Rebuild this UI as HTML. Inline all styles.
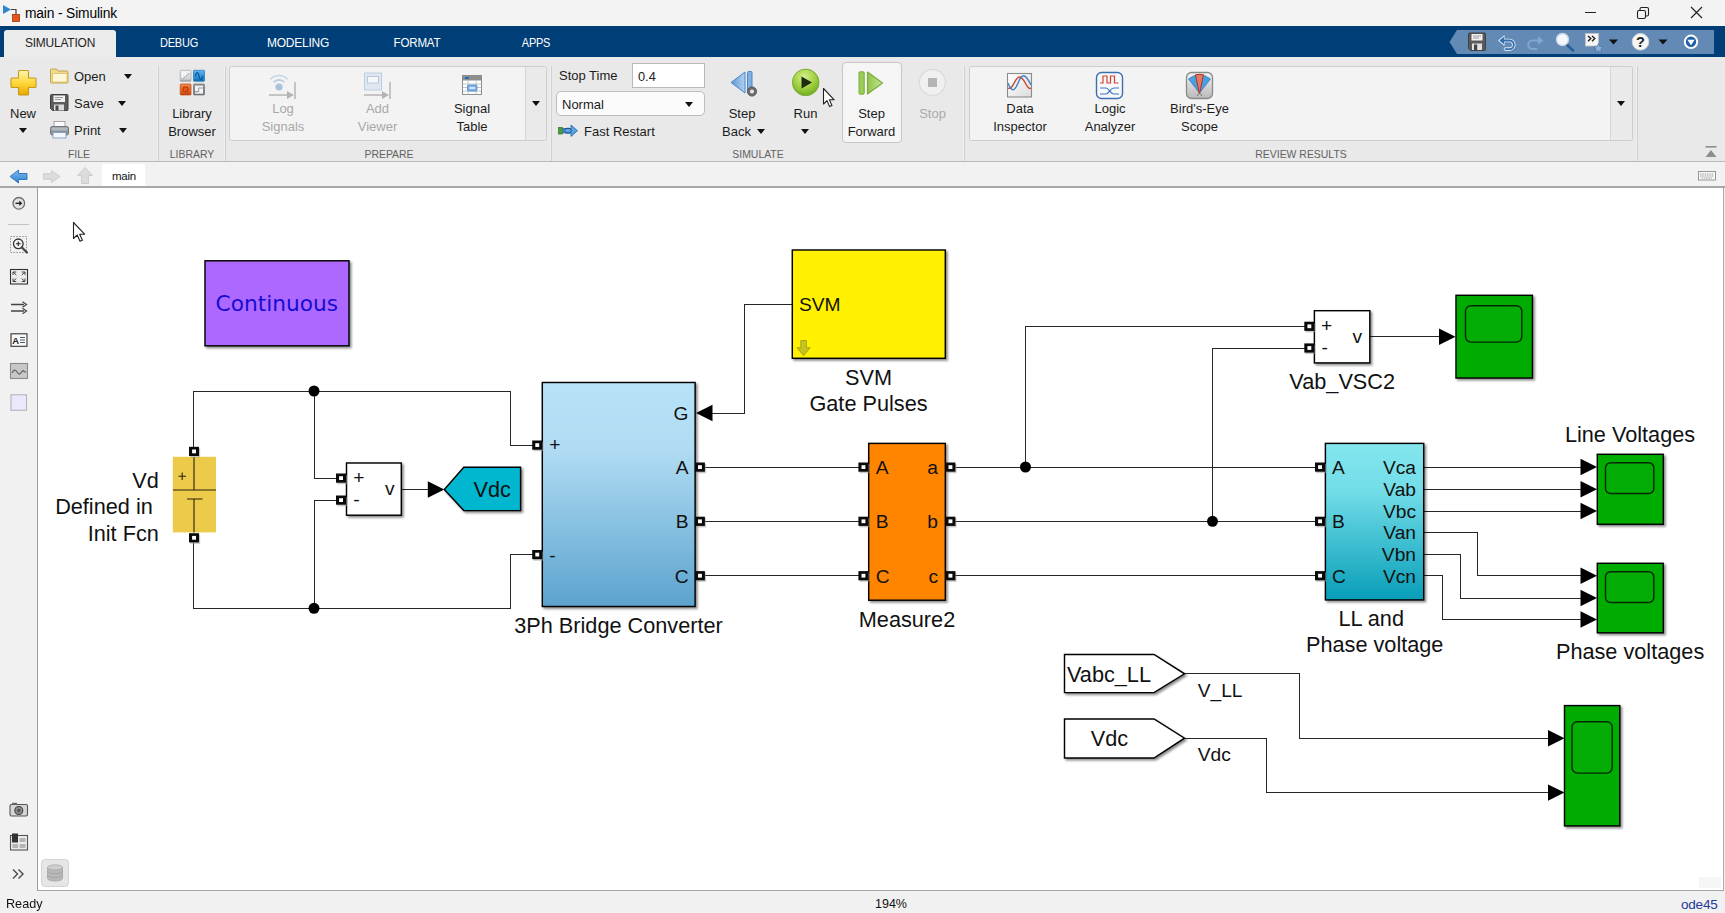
<!DOCTYPE html>
<html lang="en">
<head>
<meta charset="utf-8">
<title>main - Simulink</title>
<style>
html,body{margin:0;padding:0;}
body{width:1725px;height:913px;overflow:hidden;background:#f0f0f0;position:relative;
  font-family:"Liberation Sans","DejaVu Sans",sans-serif;font-size:12px;color:#1c1c1c;}
.a{position:absolute;}
.t{position:absolute;white-space:nowrap;line-height:16px;height:16px;}
.c{position:absolute;white-space:nowrap;line-height:16px;height:16px;transform:translateX(-50%);text-align:center;}
#title{left:0;top:0;width:1725px;height:26px;background:#f3f3f3;}
#tabs{left:0;top:26px;width:1725px;height:31px;background:#003e78;}
#tabsel{left:4px;top:30px;width:112px;height:28px;background:#ececec;border-radius:3px 3px 0 0;}
.tab{color:#fff;font-size:12px;top:35px;letter-spacing:-0.2px;}
#ribbon{left:0;top:57px;width:1725px;height:103.5px;background:#e9e9e9;border-bottom:1.5px solid #b9b9b9;}
.sep{position:absolute;top:66px;width:1px;height:95px;background:#cfcfcf;border-left:1px solid #f0f0f0;margin-left:-1px;}
.sec{color:#626262;font-size:11.5px;top:146px;transform:translateX(-50%) scaleX(0.908);}
.gal{position:absolute;top:66px;height:73px;border:1px solid #cdcdcd;border-radius:2.5px;background:#f3f3f3;}
.gdd{position:absolute;top:0;right:0;width:20px;height:73px;border-left:1px solid #d6d6d6;background:#eaeaea;border-radius:0 3px 3px 0;}
.lbl{font-size:13px;color:#1c1c1c;margin-top:0.7px;}
.dis{color:#a9a9a9;}
.tri{position:absolute;width:0;height:0;border-left:4.5px solid transparent;border-right:4.5px solid transparent;border-top:5px solid #111;}
#crumb{left:0;top:162px;width:1725px;height:25px;background:#f2f2f2;}
#crumbline{left:0;top:186px;width:1725px;height:2px;background:#a8a8a8;}
#maintab{left:102px;top:164px;width:43px;height:23px;background:#fff;border-radius:2px 2px 0 0;}
#palette{left:0;top:188px;width:37px;height:703px;background:#f1f1f1;}
#canvas{left:37px;top:188px;width:1685px;height:702px;background:#fff;border-left:1px solid #9c9c9c;border-bottom:1px solid #a6a6a6;border-right:1px solid #ababab;}
#status{left:0;top:891px;width:1725px;height:22px;background:#f1f1f1;}
</style>
</head>
<body>
<!-- ===== title bar ===== -->
<div class="a" id="title"></div>
<svg class="a" style="left:2px;top:3px" width="20" height="20" viewBox="0 0 20 20">
  <polygon points="1,2 1,11 9,6.5" fill="#2f86c9"/>
  <polyline points="9,6.5 14,6.5 14,12" fill="none" stroke="#444" stroke-width="1.2"/>
  <rect x="10.5" y="11.5" width="7" height="7" fill="#e2581c" stroke="#a63a0c" stroke-width="0.8"/>
</svg>
<div class="t" style="left:25px;top:5.5px;font-size:13.8px;color:#000;letter-spacing:-0.15px">main - Simulink</div>
<svg class="a" style="left:1570px;top:0" width="155" height="26" viewBox="0 0 155 26">
  <line x1="15" y1="12.5" x2="26" y2="12.5" stroke="#222" stroke-width="1"/>
  <rect x="67.5" y="10.5" width="8" height="8" rx="1.5" fill="none" stroke="#222" stroke-width="1.1"/>
  <path d="M70 10.5 V9 a1.5 1.5 0 0 1 1.5 -1.5 H77 a1.5 1.5 0 0 1 1.5 1.5 V14.5 a1.5 1.5 0 0 1 -1.5 1.5 H75.5" fill="none" stroke="#222" stroke-width="1.1"/>
  <path d="M121 7 L132 18 M132 7 L121 18" stroke="#222" stroke-width="1.2" fill="none"/>
</svg>

<!-- ===== tab strip ===== -->
<div class="a" id="tabs"></div>
<div class="a" id="tabsel"></div>
<div class="c tab" style="left:59.5px;color:#222;transform:translateX(-50%) scaleX(0.996)">SIMULATION</div>
<div class="c tab" style="left:178.7px;transform:translateX(-50%) scaleX(0.917)">DEBUG</div>
<div class="c tab" style="left:298px;transform:translateX(-50%) scaleX(0.997)">MODELING</div>
<div class="c tab" style="left:416.6px;transform:translateX(-50%) scaleX(0.964)">FORMAT</div>
<div class="c tab" style="left:535.8px;transform:translateX(-50%) scaleX(0.912)">APPS</div>

<!-- ===== ribbon ===== -->
<div class="a" id="ribbon"></div>
<!-- FILE section -->
<svg class="a" style="left:9px;top:68px" width="29" height="29" viewBox="0 0 29 29">
  <defs><linearGradient id="gplus" x1="0" y1="0" x2="0" y2="1"><stop offset="0" stop-color="#fff6b0"/><stop offset="0.5" stop-color="#ffd83a"/><stop offset="1" stop-color="#e8a800"/></linearGradient></defs>
  <path d="M10.5 2.5 h8 a1 1 0 0 1 1 1 v6.5 h6.5 a1 1 0 0 1 1 1 v7.5 a1 1 0 0 1 -1 1 h-6.5 v6.5 a1 1 0 0 1 -1 1 h-8 a1 1 0 0 1 -1 -1 v-6.5 h-6.5 a1 1 0 0 1 -1 -1 v-7.5 a1 1 0 0 1 1 -1 h6.5 v-6.5 a1 1 0 0 1 1 -1 z" fill="url(#gplus)" stroke="#c79a1a" stroke-width="1.1"/>
</svg>
<div class="c lbl" style="left:23px;top:105px">New</div>
<div class="tri" style="left:18.5px;top:128px"></div>
<!-- open -->
<svg class="a" style="left:49px;top:67px" width="21" height="18" viewBox="0 0 21 18">
  <path d="M1.5 3 q0 -1 1 -1 h5 l1.5 2 h9 q1 0 1 1 v10 q0 1 -1 1 h-15.5 q-1 0 -1 -1 z" fill="#f0d98a" stroke="#c4a64a" stroke-width="1"/>
  <path d="M3.5 6.5 h14.5 v8.5 h-14.5 z" fill="#fff8d8" stroke="#d8be6a" stroke-width="0.8"/>
</svg>
<div class="t lbl" style="left:74px;top:68px">Open</div>
<div class="tri" style="left:123.5px;top:74px"></div>
<!-- save -->
<svg class="a" style="left:49px;top:93px" width="21" height="19" viewBox="0 0 21 19">
  <path d="M1.5 2.5 q0 -1 1 -1 h15.5 q1 0 1 1 v14 q0 1 -1 1 h-14.5 l-2 -2 z" fill="#5c5c5c" stroke="#3e3e3e" stroke-width="1"/>
  <rect x="4.5" y="2.5" width="11.5" height="6.5" fill="#f2f2f2"/>
  <rect x="6" y="4" width="8" height="1" fill="#9a9a9a"/><rect x="6" y="6" width="6" height="1" fill="#9a9a9a"/>
  <rect x="5" y="11.5" width="10" height="6" fill="#dcdcdc"/><rect x="6.5" y="12.5" width="3" height="5" fill="#4a4a4a"/>
</svg>
<div class="t lbl" style="left:74px;top:95px">Save</div>
<div class="tri" style="left:117.5px;top:101px"></div>
<!-- print -->
<svg class="a" style="left:49px;top:120px" width="21" height="20" viewBox="0 0 21 20">
  <rect x="5" y="1.5" width="11" height="6" fill="#fafafa" stroke="#9c9c9c" stroke-width="0.9"/>
  <rect x="1.5" y="6.5" width="18" height="8.5" rx="1.8" fill="#8e9499" stroke="#6a7076" stroke-width="0.9"/>
  <rect x="2.5" y="7.5" width="16" height="3" rx="1" fill="#b4b9be"/>
  <rect x="4" y="12.5" width="13" height="5.5" fill="#f4f8fc" stroke="#7d9cc0" stroke-width="0.9"/>
</svg>
<div class="t lbl" style="left:74px;top:122px">Print</div>
<div class="tri" style="left:118.5px;top:128px"></div>
<div class="c sec" style="left:79px">FILE</div>
<div class="sep" style="left:158px"></div>
<!-- LIBRARY section -->
<svg class="a" style="left:179px;top:69px" width="27" height="27" viewBox="0 0 27 27">
  <defs>
    <linearGradient id="gl1" x1="0" y1="0" x2="0" y2="1"><stop offset="0" stop-color="#f4f4f4"/><stop offset="0.8" stop-color="#cfd3d8"/><stop offset="1" stop-color="#8e9499"/></linearGradient>
    <linearGradient id="gl2" x1="0" y1="0" x2="0" y2="1"><stop offset="0" stop-color="#62b6ee"/><stop offset="0.75" stop-color="#2288d0"/><stop offset="1" stop-color="#0f66a6"/></linearGradient>
    <linearGradient id="gl3" x1="0" y1="0" x2="0" y2="1"><stop offset="0" stop-color="#f08a50"/><stop offset="0.75" stop-color="#e4581a"/><stop offset="1" stop-color="#b8400c"/></linearGradient>
    <linearGradient id="gl4" x1="0" y1="0" x2="0" y2="1"><stop offset="0" stop-color="#9a9a9a"/><stop offset="1" stop-color="#6e7276"/></linearGradient>
  </defs>
  <rect x="1.2" y="1.3" width="10.8" height="11" rx="0.8" fill="url(#gl1)" stroke="#a4a8ac" stroke-width="0.7"/>
  <path d="M3.6 3 v6 M6.300 3 v4.500" stroke="#fff" stroke-width="1.500" fill="none"/>
  <path d="M3 10.300 L10.500 4.500" stroke="#9aa0a6" stroke-width="0.900" fill="none"/>
  <rect x="14.500" y="1.300" width="11" height="11" rx="0.800" fill="url(#gl2)" stroke="#1d74b8" stroke-width="0.700"/>
  <path d="M16.300 7.300 c1.400 -4.800 2.600 -4.800 3.800 0 s2.400 4.200 3.800 -0.500" fill="none" stroke="#0b5a9c" stroke-width="1.300"/>
  <rect x="1.200" y="15" width="10.800" height="11" rx="0.800" fill="url(#gl3)" stroke="#c04a14" stroke-width="0.700"/>
  <rect x="4.300" y="18.200" width="4.600" height="4.600" rx="0.800" fill="#e4581a" stroke="#b8400c" stroke-width="1.300"/>
  <rect x="14.500" y="15" width="11" height="11" rx="0.800" fill="url(#gl4)" stroke="#70757a" stroke-width="0.700"/>
  <path d="M16 16.700 h8 v8 h-8 z" fill="#f2f2f2"/>
  <path d="M16 22.600 h3.600 v-3.600 h4.400" fill="none" stroke="#9ea3a8" stroke-width="1.100"/>
</svg>
<div class="c lbl" style="left:192px;top:105px">Library</div>
<div class="c lbl" style="left:192px;top:123px">Browser</div>
<div class="c sec" style="left:192px">LIBRARY</div>
<div class="sep" style="left:225px"></div>
<!-- PREPARE section -->
<div class="gal" style="left:229px;width:316px"><div class="gdd"></div></div>
<div class="tri" style="left:531.5px;top:101px"></div>
<svg class="a" style="left:267px;top:70px" width="32" height="30" viewBox="0 0 32 30">
  <circle cx="12" cy="17" r="3.6" fill="#a9c3dc"/>
  <path d="M6.6 12.2 a7.5 7.5 0 0 1 10.8 0" fill="none" stroke="#b4cbe2" stroke-width="1.6"/>
  <path d="M3.4 9.2 a12 12 0 0 1 17.2 0" fill="none" stroke="#c3d5e6" stroke-width="1.6"/>
  <line x1="2" y1="25" x2="22" y2="25" stroke="#b4b4b4" stroke-width="1.5"/>
  <polygon points="20,21 27,25 20,29" fill="#b4b4b4"/>
  <line x1="28" y1="12" x2="28" y2="29" stroke="#b4b4b4" stroke-width="1.5"/>
</svg>
<div class="c lbl dis" style="left:283px;top:100px">Log</div>
<div class="c lbl dis" style="left:283px;top:118px">Signals</div>
<svg class="a" style="left:362px;top:70px" width="32" height="30" viewBox="0 0 32 30">
  <rect x="2.5" y="3" width="17" height="17" fill="#dfe8f1" stroke="#c0cfde" stroke-width="1"/>
  <rect x="5.5" y="6.5" width="11" height="6.5" fill="#f4f8fb" stroke="#b7c8da" stroke-width="1"/>
  <line x1="2" y1="25" x2="22" y2="25" stroke="#b4b4b4" stroke-width="1.5"/>
  <polygon points="20,21 27,25 20,29" fill="#b4b4b4"/>
  <line x1="28" y1="12" x2="28" y2="29" stroke="#b4b4b4" stroke-width="1.5"/>
</svg>
<div class="c lbl dis" style="left:377.5px;top:100px">Add</div>
<div class="c lbl dis" style="left:377.5px;top:118px">Viewer</div>
<svg class="a" style="left:461px;top:74px" width="22" height="22" viewBox="0 0 22 22">
  <rect x="1.5" y="1.5" width="19" height="19" fill="#fff" stroke="#8c8c8c" stroke-width="1"/>
  <rect x="2" y="2" width="18" height="4.5" fill="#8e8e8e"/>
  <rect x="4" y="3" width="4" height="2" fill="#1f6cc0"/>
  <path d="M2 10 h18 M2 13.5 h18 M2 17 h18 M7 6.5 v14 M15 6.5 v14" stroke="#c4c4c4" stroke-width="1" fill="none"/>
  <rect x="6.5" y="11" width="9.5" height="6" rx="1" fill="#7fb0ea" stroke="#4b8bd6" stroke-width="0.8"/>
  <rect x="8.5" y="13" width="5.5" height="2" fill="#d6e6fa"/>
</svg>
<div class="c lbl" style="left:472px;top:100px">Signal</div>
<div class="c lbl" style="left:472px;top:118px">Table</div>
<div class="c sec" style="left:389px">PREPARE</div>
<div class="sep" style="left:551px"></div>
<!-- SIMULATE section -->
<div class="t lbl" style="left:559px;top:67px">Stop Time</div>
<div class="a" style="left:632px;top:63px;width:71px;height:23px;background:#fff;border:1px solid #b9b9b9;"></div>
<div class="t" style="left:638px;top:68.6px;font-size:12.8px;color:#222">0.4</div>
<div class="a" style="left:556px;top:91px;width:147px;height:23px;background:#fbfbfb;border:1px solid #bdbdbd;border-radius:5px;"></div>
<div class="t lbl" style="left:562px;top:96px">Normal</div>
<div class="tri" style="left:684.5px;top:101.5px"></div>
<svg class="a" style="left:557px;top:123px" width="22" height="16" viewBox="0 0 22 16">
  <rect x="1.5" y="4.5" width="4" height="6.5" fill="#4c9a3a" stroke="#2f7622" stroke-width="0.7"/>
  <path d="M6 5.5 h8 v-3.5 l6.5 5.7 l-6.5 5.7 v-3.5 h-8 z" fill="#5da3e0" stroke="#2b6cb0" stroke-width="0.9"/>
  <ellipse cx="11" cy="7.7" rx="3.4" ry="2.6" fill="none" stroke="#1d4f8c" stroke-width="1"/>
</svg>
<div class="t lbl" style="left:584px;top:123px">Fast Restart</div>
<!-- step back -->
<svg class="a" style="left:728px;top:69px" width="32" height="30" viewBox="0 0 32 30">
  <defs><linearGradient id="gsb" x1="0" y1="0" x2="1" y2="0"><stop offset="0" stop-color="#5f9bd6"/><stop offset="1" stop-color="#b3d0ee"/></linearGradient></defs>
  <polygon points="3,13.5 17,3 17,24" fill="url(#gsb)" stroke="#4a86c4" stroke-width="1"/>
  <rect x="19.5" y="2.5" width="4.5" height="21" rx="1" fill="#7fb0e2" stroke="#4a86c4" stroke-width="1"/>
  <circle cx="24" cy="22.5" r="4.6" fill="#6e6e6e" stroke="#4a4a4a" stroke-width="0.8"/>
  <circle cx="24" cy="22.5" r="2" fill="#e8e8e8"/>
</svg>
<div class="c lbl" style="left:742px;top:105px">Step</div>
<div class="t lbl" style="left:722px;top:123px">Back</div>
<div class="tri" style="left:756.5px;top:128.5px"></div>
<!-- run -->
<svg class="a" style="left:790px;top:67px" width="32" height="32" viewBox="0 0 32 32">
  <defs><radialGradient id="grun" cx="0.45" cy="0.3" r="0.75"><stop offset="0" stop-color="#d6f08a"/><stop offset="0.55" stop-color="#9fd040"/><stop offset="1" stop-color="#6aa51e"/></radialGradient></defs>
  <circle cx="15.7" cy="15.4" r="13.3" fill="url(#grun)" stroke="#7cad34" stroke-width="1"/>
  <polygon points="11.5,9.5 11.5,21.5 22,15.5" fill="#1f2a12"/>
</svg>
<div class="c lbl" style="left:805.5px;top:105px">Run</div>
<div class="tri" style="left:801px;top:128.5px"></div>
<!-- step forward -->
<div class="a" style="left:842px;top:62px;width:58px;height:79px;background:#f5f5f5;border:1px solid #c6c6c6;border-radius:4px;"></div>
<svg class="a" style="left:856px;top:69px" width="30" height="28" viewBox="0 0 30 28">
  <defs><linearGradient id="gsf" x1="0" y1="0" x2="1" y2="0"><stop offset="0" stop-color="#8fc44a"/><stop offset="1" stop-color="#c6e596"/></linearGradient></defs>
  <rect x="3" y="2.8" width="5.2" height="22.4" rx="1" fill="#9ccc58" stroke="#78ac36" stroke-width="1"/>
  <polygon points="11.5,3 11.5,25 26.5,14" fill="url(#gsf)" stroke="#78ac36" stroke-width="1.1" stroke-linejoin="round"/>
</svg>
<div class="c lbl" style="left:871.5px;top:105px">Step</div>
<div class="c lbl" style="left:871.5px;top:123px">Forward</div>
<!-- stop -->
<svg class="a" style="left:917px;top:67px" width="32" height="32" viewBox="0 0 32 32">
  <circle cx="15.4" cy="15.4" r="13" fill="#f0f0f0" stroke="#dadada" stroke-width="1.2"/>
  <rect x="11" y="11" width="9" height="9" fill="#b5b5b5"/>
</svg>
<div class="c lbl dis" style="left:932.5px;top:105px">Stop</div>
<div class="c sec" style="left:758px">SIMULATE</div>
<div class="sep" style="left:964px"></div>
<!-- REVIEW RESULTS section -->
<div class="gal" style="left:969px;width:662px"><div class="gdd" style="width:21px"></div></div>
<div class="tri" style="left:1616.5px;top:101px"></div>
<svg class="a" style="left:1005px;top:71px" width="30" height="28" viewBox="0 0 30 28">
  <defs><linearGradient id="gdi" x1="0" y1="0" x2="1" y2="1"><stop offset="0" stop-color="#ffffff"/><stop offset="1" stop-color="#dcdcdc"/></linearGradient></defs>
  <rect x="2.5" y="2.5" width="24" height="23.5" fill="url(#gdi)" stroke="#8c8c8c" stroke-width="1.1"/>
  <path d="M3 17 C8 20 10 5 15 6 S22 20 26 17" fill="none" stroke="#d0452c" stroke-width="1.4"/>
  <path d="M3 12 C6 20 9 22 13 12 S20 2 26 14" fill="none" stroke="#3a80c8" stroke-width="1.4"/>
</svg>
<div class="c lbl" style="left:1020px;top:100px">Data</div>
<div class="c lbl" style="left:1020px;top:118px">Inspector</div>
<svg class="a" style="left:1094px;top:70px" width="32" height="30" viewBox="0 0 32 30">
  <rect x="2.5" y="2.5" width="26" height="26" rx="5" fill="#f6f8fb" stroke="#3f6fb0" stroke-width="1.4"/>
  <path d="M6 13 h3 v-7 h4 v7 h3.5 v-7 h4 v7 h4" fill="none" stroke="#d8422c" stroke-width="1.2"/>
  <path d="M6 18 h6 c3 0 4 6 8 6 h5 M6 24 h6 c3 0 4 -6 8 -6 h5" fill="none" stroke="#3a78c0" stroke-width="1.2"/>
</svg>
<div class="c lbl" style="left:1110px;top:100px">Logic</div>
<div class="c lbl" style="left:1110px;top:118px">Analyzer</div>
<svg class="a" style="left:1184px;top:70px" width="32" height="30" viewBox="0 0 32 30">
  <defs><linearGradient id="gbe" x1="0" y1="0" x2="0" y2="1"><stop offset="0" stop-color="#f2f2f2"/><stop offset="1" stop-color="#b9b9b9"/></linearGradient></defs>
  <rect x="2.5" y="2.5" width="26" height="26" rx="5" fill="url(#gbe)" stroke="#8a8a8a" stroke-width="1.3"/>
  <path d="M15.5 23 L4.5 9 Q15.5 0.5 26.5 9 Z" fill="#4a9fe0" stroke="#2f7fc4" stroke-width="0.8"/>
  <path d="M15.5 24 L11.5 4.8 Q15.5 3.8 19.5 4.8 Z" fill="#e07a68" stroke="#b8321c" stroke-width="1"/>
  <path d="M13 26 l2.5 -3 l2.5 3" fill="none" stroke="#777" stroke-width="1"/>
</svg>
<div class="c lbl" style="left:1199.5px;top:100px">Bird's-Eye</div>
<div class="c lbl" style="left:1199.5px;top:118px">Scope</div>
<div class="c sec" style="left:1300.5px">REVIEW RESULTS</div>
<div class="sep" style="left:1637px"></div>
<!-- collapse icon -->
<svg class="a" style="left:1703.3px;top:144px" width="16" height="16" viewBox="0 0 16 16">
  <rect x="2.5" y="2" width="11" height="1.6" fill="#8e8e8e"/>
  <polygon points="8,6 13.5,13 2.5,13" fill="#8e8e8e"/>
</svg>
<!-- cursor near Run -->
<svg class="a" style="left:822px;top:87px" width="14" height="22" viewBox="0 0 14 22">
  <path d="M1.5 1.5 V17 L5 13.6 L7.6 19.6 L10 18.6 L7.4 12.8 H12.2 Z" fill="#fff" stroke="#222" stroke-width="1.1" stroke-linejoin="round"/>
</svg>
<!-- quick access toolbar -->
<svg class="a" style="left:1445px;top:28px" width="275" height="28" viewBox="1445 28 275 28">
  <polygon points="1449.5,42 1457,30 1714,30 1714,54 1457,54" fill="#628ab5"/>
  <!-- save -->
  <path d="M1468.5 34 q0 -1 1 -1 h15 q1 0 1 1 v15.5 q0 1 -1 1 h-14 l-2 -2 z" fill="#5a5a5a" stroke="#3c3c3c" stroke-width="0.9"/>
  <rect x="1471.5" y="34" width="11" height="6.5" fill="#f2f2f2"/>
  <rect x="1473" y="35.5" width="8" height="1" fill="#999"/><rect x="1473" y="37.5" width="6" height="1" fill="#999"/>
  <rect x="1472" y="43.5" width="10" height="6.5" fill="#e2e2e2"/><rect x="1474" y="44.5" width="3.2" height="5.5" fill="#444"/>
  <!-- undo -->
  <path d="M1501 40.5 h8.5 a4.3 4.3 0 0 1 0 8.6 h-4" fill="none" stroke="#dfe9f4" stroke-width="3.6" stroke-linecap="round"/>
  <polygon points="1498,40.5 1504.5,35 1504.5,46" fill="#dfe9f4"/>
  <path d="M1501 40.5 h8.5 a4.3 4.3 0 0 1 0 8.6 h-4" fill="none" stroke="#2f6fb2" stroke-width="1.8" stroke-linecap="round"/>
  <polygon points="1499.5,40.5 1504,36.8 1504,44.2" fill="#2f6fb2"/>
  <!-- redo -->
  <path d="M1541 40.5 h-8.5 a4.3 4.3 0 0 0 0 8.6 h4" fill="none" stroke="#82a6cc" stroke-width="2" stroke-linecap="round"/>
  <polygon points="1543.5,40.5 1538,36 1538,45" fill="#82a6cc"/>
  <!-- search -->
  <line x1="1566" y1="44" x2="1573" y2="50.5" stroke="#2a5d9a" stroke-width="2.6" stroke-linecap="round"/>
  <circle cx="1562.5" cy="39.5" r="6" fill="#f4f8fc" stroke="#c9d6e4" stroke-width="1.4"/>
  <!-- doc with arrows -->
  <rect x="1585.5" y="33.5" width="13" height="12.5" fill="#f4f4f4" stroke="#c4c4c4" stroke-width="0.8"/>
  <path d="M1588 36 l2.8 2.6 l-2.8 2.6 M1592 36 l2.8 2.6 l-2.8 2.6" fill="none" stroke="#222" stroke-width="1.4"/>
  <polygon points="1598.500,43.500 1599.911,46.558 1603.255,46.955 1600.783,49.242 1601.439,52.545 1598.500,50.900 1595.561,52.545 1596.217,49.242 1593.745,46.955 1597.089,46.558" fill="#8fb0d8" stroke="#4a78b0" stroke-width="0.8"/>
  <polygon points="1609,39.5 1618,39.5 1613.500,44.500" fill="#111"/>
  <!-- help -->
  <circle cx="1640.500" cy="41.800" r="8.300" fill="#f6f6f6" stroke="#d4d4d4" stroke-width="1"/>
  <text x="1640.500" y="47" font-family="Liberation Sans, sans-serif" font-weight="bold" font-size="14.500" text-anchor="middle" fill="#222">?</text>
  <polygon points="1658.500,39.500 1667.500,39.500 1663,44.500" fill="#111"/>
  <!-- circle down -->
  <circle cx="1691" cy="41.800" r="6.200" fill="#1f5fa6" stroke="#ffffff" stroke-width="2"/>
  <polygon points="1687.300,39.800 1694.700,39.800 1691,45.200" fill="#fff"/>
</svg>


<!-- ===== breadcrumb ===== -->
<div class="a" id="crumb"></div>
<div class="a" id="maintab"></div>
<div class="a" id="crumbline"></div>
<div class="c" style="left:124px;top:168px;font-size:11.5px;color:#111;letter-spacing:-0.2px">main</div>
<svg class="a" style="left:0;top:162px" width="160" height="26" viewBox="0 162 160 26">
  <defs><linearGradient id="gba" x1="0" y1="0" x2="0" y2="1"><stop offset="0" stop-color="#7cbcf0"/><stop offset="1" stop-color="#2f7fd0"/></linearGradient></defs>
  <path d="M10 176.5 L18.500 170 V173.500 H27 V179.500 H18.500 V183 Z" fill="url(#gba)" stroke="#2a6fb8" stroke-width="0.9" stroke-linejoin="round"/>
  <path d="M60 176.500 L51.500 170.500 V173.800 H43.500 V179.200 H51.500 V182.500 Z" fill="#dcdcdc" stroke="#c9c9c9" stroke-width="0.9" stroke-linejoin="round"/>
  <path d="M85 167.500 L92.500 175.500 H88.500 V183.500 H81.500 V175.500 H77.500 Z" fill="#dcdcdc" stroke="#c9c9c9" stroke-width="0.9" stroke-linejoin="round"/>
</svg>
<svg class="a" style="left:1696px;top:168px" width="24" height="16" viewBox="0 0 24 16">
  <rect x="2.5" y="3.500" width="17" height="8.500" fill="#fafafa" stroke="#8c8c8c" stroke-width="0.9"/>
  <path d="M4 6 h14 M4 8 h14 M5.500 10 h11" stroke="#9a9a9a" stroke-width="1" stroke-dasharray="1.5 0.8" fill="none"/>
</svg>


<!-- ===== palette + canvas ===== -->
<div class="a" id="palette"></div>
<div class="a" id="canvas"></div>
<svg class="a" style="left:0;top:190px" width="37" height="700" viewBox="0 190 37 700">
  <!-- hide/show -->
  <circle cx="18.800" cy="203.300" r="5.800" fill="#e4e4e4" stroke="#6e6e6e" stroke-width="1.300"/>
  <path d="M15.500 203.300 h5" stroke="#222" stroke-width="1.400" fill="none"/><polygon points="19.300,200.600 22.300,203.300 19.300,206" fill="#222"/>
  <line x1="8" y1="224.500" x2="29" y2="224.500" stroke="#c4c4c4" stroke-width="1"/>
  <!-- zoom -->
  <rect x="10.500" y="236.500" width="16" height="16" fill="none" stroke="#8a8a8a" stroke-width="0.9" stroke-dasharray="1.600 1.300"/>
  <circle cx="18.300" cy="243.800" r="4.800" fill="#f4f4f4" stroke="#333" stroke-width="1.300"/>
  <path d="M16 243.800 h4.600 M18.300 241.500 v4.600" stroke="#222" stroke-width="1.100" fill="none"/>
  <line x1="22" y1="247.500" x2="27" y2="252.500" stroke="#444" stroke-width="2.200" stroke-linecap="round"/>
  <!-- fit -->
  <rect x="10.500" y="269.500" width="17" height="14.500" fill="#ececec" stroke="#333" stroke-width="1.100"/>
  <path d="M13 275 v-3 h3.200 M13 272 l3.300 3 M25 275 v-3 h-3.200 M25 272 l-3.300 3 M13 278.500 v3 h3.200 M13 281.500 l3.300 -3 M25 278.500 v3 h-3.200 M25 281.500 l-3.300 -3" fill="none" stroke="#444" stroke-width="1"/>
  <!-- arrows -->
  <path d="M11 304.500 h13 M11 311 h13" stroke="#444" stroke-width="1.300" fill="none"/>
  <path d="M22.500 301.800 l4 2.700 l-4 2.700 M22.500 308.300 l4 2.700 l-4 2.700" fill="none" stroke="#444" stroke-width="1.200"/>
  <!-- annotation -->
  <rect x="11" y="333.800" width="16" height="12.500" fill="#fafafa" stroke="#333" stroke-width="1.100"/>
  <text x="12.200" y="343.800" font-family="Liberation Sans, sans-serif" font-weight="bold" font-size="9.500" fill="#222">A</text>
  <path d="M20 337.500 h5 M20 340 h5 M20 342.500 h5" stroke="#555" stroke-width="1" fill="none"/>
  <!-- image -->
  <rect x="10.500" y="363.500" width="17" height="15" fill="#c8c8c8" stroke="#8a8a8a" stroke-width="1.100"/>
  <path d="M12 373 q2.500 -5 5 -1 t4 0.500 l2 -2 l3 2" fill="none" stroke="#6a6a6a" stroke-width="1.300"/>
  <!-- area -->
  <rect x="11" y="394.800" width="15.500" height="15.500" fill="#e9e9fb" stroke="#b4b4bc" stroke-width="1.100"/>
  <!-- camera -->
  <rect x="10" y="804.500" width="17.500" height="11.500" rx="1.500" fill="#d6d6d6" stroke="#555" stroke-width="1.100"/>
  <rect x="12" y="802.800" width="5" height="2" fill="#666"/>
  <circle cx="18.800" cy="810.500" r="4" fill="#8a8a8a" stroke="#444" stroke-width="1.100"/><circle cx="18.800" cy="810.500" r="1.700" fill="#555"/>
  <!-- model data -->
  <rect x="10.500" y="835.500" width="17" height="14.500" fill="#ececec" stroke="#555" stroke-width="1.100"/>
  <rect x="12" y="833.500" width="6" height="9" fill="#333"/>
  <rect x="19.500" y="838" width="6" height="4" fill="#b4b4b4"/><rect x="12.500" y="844" width="5.500" height="4" fill="#b4b4b4"/><rect x="19.500" y="844" width="6" height="4" fill="#b4b4b4"/>
  <!-- chevrons -->
  <path d="M13 869.500 l4.500 4.500 l-4.500 4.500 M18.500 869.500 l4.500 4.500 l-4.500 4.500" fill="none" stroke="#555" stroke-width="1.500"/>
</svg>
<!-- db button in canvas -->
<div class="a" style="left:41px;top:859px;width:26px;height:26px;background:#e6e6e6;border:1px solid #d4d4d4;border-radius:4px;"></div>
<svg class="a" style="left:45px;top:863px" width="20" height="20" viewBox="0 0 20 20">
  <path d="M2.500 4.500 v11 a7.500 2.600 0 0 0 15 0 v-11" fill="#b9b9b9" stroke="#a4a4a4" stroke-width="0.800"/>
  <ellipse cx="10" cy="4.500" rx="7.500" ry="2.600" fill="#cfcfcf" stroke="#a4a4a4" stroke-width="0.800"/>
  <path d="M2.500 8.200 a7.500 2.600 0 0 0 15 0 M2.500 11.900 a7.500 2.600 0 0 0 15 0" fill="none" stroke="#a0a0a0" stroke-width="0.800"/>
</svg>
<!-- canvas cursor -->
<svg class="a" style="left:72px;top:221px" width="15" height="23" viewBox="0 0 15 23">
  <path d="M1.500 1.500 V17.500 L5.200 14 L8 20.300 L10.400 19.200 L7.700 13.200 H12.600 Z" fill="#fff" stroke="#222" stroke-width="1.100" stroke-linejoin="round"/>
</svg>
<!-- bottom-right corner hint -->
<div class="a" style="left:1699px;top:877px;width:22px;height:11px;background:#f6f6f6;"></div>

<svg class="a" style="left:0;top:0" width="1725" height="913" viewBox="0 0 1725 913" font-family="'Liberation Sans', sans-serif" fill="#111">
  <defs>
    <filter id="sh" x="-10%" y="-10%" width="130%" height="130%"><feDropShadow dx="1.8" dy="1.8" stdDeviation="1.1" flood-color="#000" flood-opacity="0.45"/></filter>
    <linearGradient id="gbr" x1="0" y1="0" x2="0" y2="1"><stop offset="0" stop-color="#b6e3f8"/><stop offset="0.3" stop-color="#b0dcf3"/><stop offset="1" stop-color="#5ca3ce"/></linearGradient>
    <linearGradient id="gll" x1="0" y1="0" x2="0" y2="1"><stop offset="0" stop-color="#84e6ee"/><stop offset="0.3" stop-color="#72dde8"/><stop offset="1" stop-color="#089eb8"/></linearGradient>
    <g id="pt"><rect x="-5" y="-4.5" width="10" height="9.2" fill="#9a9a9a" opacity="0.55" transform="translate(1.2,1.4)"/><rect x="-5" y="-4.6" width="10" height="9.2" fill="#0a0a0a"/><rect x="-1.9" y="-1.9" width="3.9" height="3.8" fill="#fff"/></g>
    <polygon id="ah" points="0,0 -16.5,-8.2 -16.5,8.2" fill="#000"/>
    <polygon id="ahl" points="0,0 16.5,-8.2 16.5,8.2" fill="#000"/>
  </defs>
  <!-- ===== wires ===== -->
  <g fill="none" stroke="#262626" stroke-width="1" shape-rendering="crispEdges">
    <path d="M193.500 447 V391 H510 V445 H533"/>
    <path d="M314 391 V478 H337"/>
    <path d="M193.500 542 V608.300 H510 V554.500 H533"/>
    <path d="M314 608.300 V500 H337"/>
    <path d="M401.500 489.500 H430"/>
    <path d="M792 304 H744.500 V413 H710"/>
    <path d="M704 467 H859 M704 521.300 H859 M704 575.700 H859"/>
    <path d="M954.500 467 H1315.500 M954.500 521.300 H1315.500 M954.500 575.700 H1315.500"/>
    <path d="M1025.500 467 V326.300 H1305"/>
    <path d="M1212.500 521.300 V348 H1305"/>
    <path d="M1370 336.800 H1441"/>
    <path d="M1424 467 H1582 M1424 489.200 H1582 M1424 511 H1582"/>
    <path d="M1424 532.600 H1477.300 V575.700 H1582"/>
    <path d="M1424 554 H1460.500 V598 H1582"/>
    <path d="M1424 575.700 H1442.600 V619.500 H1582"/>
    <path d="M1184.500 673.800 H1299.400 V738.200 H1549"/>
    <path d="M1184.500 738.200 H1266.800 V792.600 H1549"/>
  </g>
  <!-- junction dots -->
  <g fill="#000"><circle cx="314" cy="391" r="5.500"/><circle cx="314" cy="608.300" r="5.500"/><circle cx="1025.500" cy="467" r="5.500"/><circle cx="1212.500" cy="521.300" r="5.500"/></g>
  <!-- arrowheads -->
  <use href="#ah" x="444.300" y="489.500"/>
  <use href="#ahl" x="696" y="413"/>
  <use href="#ah" x="1455.500" y="336.800"/>
  <use href="#ah" x="1597" y="467"/><use href="#ah" x="1597" y="489.200"/><use href="#ah" x="1597" y="511"/>
  <use href="#ah" x="1597" y="575.700"/><use href="#ah" x="1597" y="598"/><use href="#ah" x="1597" y="619.500"/>
  <use href="#ah" x="1564.500" y="738.200"/><use href="#ah" x="1564.500" y="792.600"/>
  <!-- ===== blocks ===== -->
  <g stroke="#030303" stroke-width="1.45" filter="url(#sh)">
    <rect x="205" y="260.800" width="144" height="85" fill="#ad67ff"/>
    <rect x="792.300" y="250" width="153" height="108.300" fill="#fff100"/>
    <rect x="542.300" y="382.500" width="152.800" height="224" fill="url(#gbr)"/>
    <rect x="868.700" y="443.400" width="76.600" height="156.800" fill="#ff8500"/>
    <rect x="1325.400" y="443.400" width="98.300" height="156.500" fill="url(#gll)"/>
    <rect x="346.500" y="463" width="54.800" height="52.200" fill="#fff"/>
    <rect x="1314.400" y="310.700" width="55.400" height="52.200" fill="#fff"/>
    <polygon points="444.300,489.400 463.800,467.200 520.600,467.200 520.600,510.600 463.800,510.600" fill="#00b7cf"/>
    <polygon points="1064.500,654.500 1154,654.500 1184.500,673.800 1154,692.600 1064.500,692.600" fill="#fff"/>
    <polygon points="1064.500,719 1154,719 1184.500,738.200 1154,758 1064.500,758" fill="#fff"/>
    <rect x="1456" y="295.300" width="76.400" height="82.700" fill="#04ac06"/>
    <rect x="1597.300" y="454.300" width="66" height="70" fill="#04ac06"/>
    <rect x="1597.300" y="563.300" width="66" height="69.500" fill="#04ac06"/>
    <rect x="1564.500" y="705.600" width="55.300" height="120.300" fill="#04ac06"/>
  </g>
  <!-- scope screens -->
  <g fill="#04ac06" stroke="#022602" stroke-width="1.4">
    <rect x="1465.500" y="305.700" width="56.300" height="36.400" rx="5.500"/>
    <rect x="1605.500" y="462.700" width="48.300" height="30.800" rx="5"/>
    <rect x="1605.500" y="571.700" width="48.300" height="30.800" rx="5"/>
    <rect x="1572" y="721.700" width="40.200" height="51.400" rx="5.500"/>
  </g>
  <!-- Vd source -->
  <rect x="172.800" y="456.800" width="43.200" height="75.600" fill="#eccb4b"/>
  <g fill="none" stroke="#2a2208" stroke-width="1.100">
    <path d="M194 457 V490 M173 490 H216 M187 499 H202.500 M194 499 V532.400"/>
    <path d="M178.500 476.300 H186 M182.200 472.600 V480"/>
  </g>
  <!-- svm badge arrow -->
  <path d="M800.800 340.500 h5.600 v7.200 h3.800 l-6.600 8 l-6.600 -8 h3.800 z" fill="#c6c41e" stroke="#9c9a1a" stroke-width="0.800"/>
  <!-- ports -->
  <use href="#pt" x="194" y="451.400"/><use href="#pt" x="194" y="537.800"/>
  <use href="#pt" x="341" y="478.100"/><use href="#pt" x="341" y="500.100"/>
  <use href="#pt" x="537.200" y="445.100"/><use href="#pt" x="537.200" y="554.600"/>
  <use href="#pt" x="699.900" y="467.100"/><use href="#pt" x="699.900" y="521.300"/><use href="#pt" x="699.900" y="575.700"/>
  <use href="#pt" x="863.400" y="467.100"/><use href="#pt" x="863.400" y="521.300"/><use href="#pt" x="863.400" y="575.700"/>
  <use href="#pt" x="950.400" y="467.100"/><use href="#pt" x="950.400" y="521.300"/><use href="#pt" x="950.400" y="575.700"/>
  <use href="#pt" x="1309.300" y="326.300"/><use href="#pt" x="1309.300" y="348"/>
  <use href="#pt" x="1320" y="467.100"/><use href="#pt" x="1320" y="521.300"/><use href="#pt" x="1320" y="575.700"/>
  <!-- ===== text ===== -->
  <text x="276.800" y="310.800" font-family="'DejaVu Sans', sans-serif" font-size="21.700" text-anchor="middle" fill="#170cd2">Continuous</text>
  <g font-size="21.700" text-anchor="middle">
    <text x="868.500" y="384.800">SVM</text>
    <text x="868.500" y="410.800">Gate Pulses</text>
    <text x="618.500" y="632.700">3Ph Bridge Converter</text>
    <text x="907" y="626.700">Measure2</text>
    <text x="1342.200" y="389.200">Vab_VSC2</text>
    <text x="1371.200" y="626.300">LL and</text>
    <text x="1374.700" y="652.300">Phase voltage</text>
    <text x="1630" y="441.800">Line Voltages</text>
    <text x="1630.100" y="658.800">Phase voltages</text>
    <text x="492.200" y="497.100">Vdc</text>
    <text x="1109" y="682.100">Vabc_LL</text>
    <text x="1109.500" y="746.200">Vdc</text>
  </g>
  <g font-size="21.700" text-anchor="end">
    <text x="158.800" y="488.300">Vd</text>
    <text x="152.800" y="514.400">Defined in</text>
    <text x="158.800" y="540.500">Init Fcn</text>
  </g>
  <g font-size="19.200">
    <text x="799" y="310.900">SVM</text>
    <text x="875.800" y="474">A</text><text x="875.800" y="528.200">B</text><text x="875.800" y="582.600">C</text>
    <text x="1332" y="474">A</text><text x="1332" y="528.200">B</text><text x="1332" y="582.600">C</text>
    <text x="1197.700" y="696.700">V_LL</text>
    <text x="1197.700" y="761.200">Vdc</text>
  </g>
  <g font-size="19.200" text-anchor="end">
    <text x="688.500" y="419.800">G</text><text x="688.500" y="474">A</text><text x="688.500" y="528.200">B</text><text x="688.500" y="582.600">C</text>
    <text x="938" y="474">a</text><text x="938" y="528.200">b</text><text x="938" y="582.600">c</text>
    <text x="1416" y="473.800">Vca</text><text x="1416" y="495.800">Vab</text><text x="1416" y="517.600">Vbc</text>
    <text x="1416" y="539.300">Van</text><text x="1416" y="560.800">Vbn</text><text x="1416" y="582.600">Vcn</text>
  </g>
  <g font-size="19.200" text-anchor="middle">
    <text x="554.900" y="451">+</text><text x="552.400" y="562">-</text>
    <text x="358.800" y="484">+</text><text x="356.500" y="505.500">-</text><text x="389.900" y="495">v</text>
    <text x="1326.500" y="332.300">+</text><text x="1324.600" y="354">-</text><text x="1357.300" y="342.600">v</text>
  </g>

</svg>


<!-- ===== status bar ===== -->
<div class="a" id="status"></div>
<div class="t" style="left:5.5px;top:896.3px;font-size:13.3px;color:#111;transform-origin:0 50%;transform:scaleX(0.95)">Ready</div>
<div class="c" style="left:891px;top:896.3px;font-size:13.3px;color:#111;transform:translateX(-50%) scaleX(0.94)">194%</div>
<div class="t" style="left:1681px;top:896.5px;font-size:13.5px;color:#24389a;letter-spacing:-0.2px">ode45</div>
</body>
</html>
